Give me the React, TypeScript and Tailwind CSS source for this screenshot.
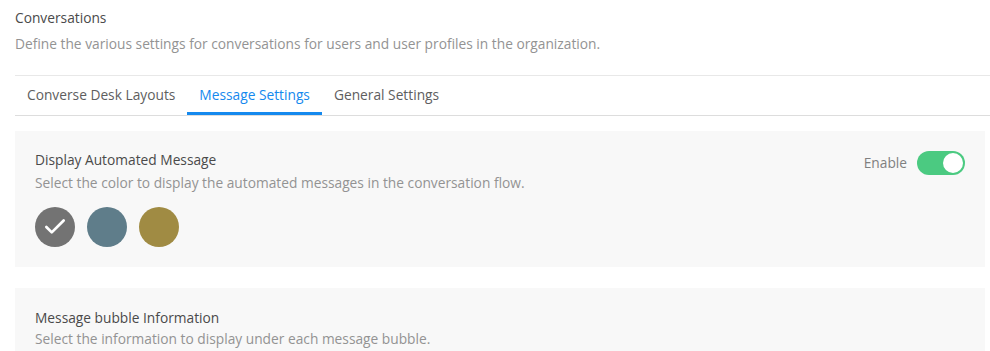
import { Check } from "lucide-react";

const swatches = [
  { color: "bg-[#737373]", selected: true },
  { color: "bg-[#5f7d8a]", selected: false },
  { color: "bg-[#a08b43]", selected: false },
];

const tabs = ["Converse Desk Layouts", "Message Settings", "General Settings"];

export default function App() {
  return (
    <div
      className="w-[990px] h-[351px] overflow-hidden bg-white pl-[15px] text-[13.75px]"
      style={{ fontFamily: "'Open Sans', 'Noto Sans', sans-serif" }}
    >
      {/* Header */}
      <div className="pt-[8px] pb-[21px]">
        <div className="text-[#4a4a4a] leading-[20px]">Conversations</div>
        <div className="text-[#939393] leading-[20px] mt-[6px]">
          Define the various settings for conversations for users and user profiles in the organization.
        </div>
      </div>

      {/* Tabs */}
      <div className="border-t border-[#e8e8e8] flex border-b border-b-[#dddddd] h-[41px]">
        {tabs.map((t, i) => (
          <div
            key={t}
            className={`px-[12px] flex items-center ${
              i === 1 ? "text-[#1589ee] border-b-[3px] border-[#1589ee] pt-[3px]" : "text-[#5e5e5e]"
            }`}
          >
            {t}
          </div>
        ))}
      </div>

      {/* Display Automated Message */}
      <div className="mt-[15px] mr-[5px] bg-[#f8f8f8] h-[136px] px-[20px] pt-[19px] flex justify-between">
        <div>
          <div className="text-[#4a4a4a] leading-[20px]">Display Automated Message</div>
          <div className="text-[#939393] leading-[20px] mt-[3px]">
            Select the color to display the automated messages in the conversation flow.
          </div>
          <div className="flex gap-[12px] mt-[14px]">
            {swatches.map((s, i) => (
              <div key={i} className={`w-[40px] h-[40px] rounded-full flex items-center justify-center ${s.color}`}>
                {s.selected && <Check className="w-[26px] h-[26px] text-white" strokeWidth={2.5} />}
              </div>
            ))}
          </div>
        </div>
        <div className="flex items-start gap-[10px] pt-[1px]">
          <span className="text-[#808080] leading-[24px]">Enable</span>
          <div className="w-[48px] h-[24px] rounded-full bg-[#4bca81] flex items-center justify-end pr-[2px]">
            <div className="w-[20px] h-[20px] rounded-full bg-white" />
          </div>
        </div>
      </div>

      {/* Message bubble Information */}
      <div className="mt-[21px] mr-[5px] bg-[#f8f8f8] h-[80px] px-[20px] pt-[20px]">
        <div className="text-[#4a4a4a] leading-[20px]">Message bubble Information</div>
        <div className="text-[#939393] leading-[20px] mt-[1px]">
          Select the information to display under each message bubble.
        </div>
      </div>
    </div>
  );
}
